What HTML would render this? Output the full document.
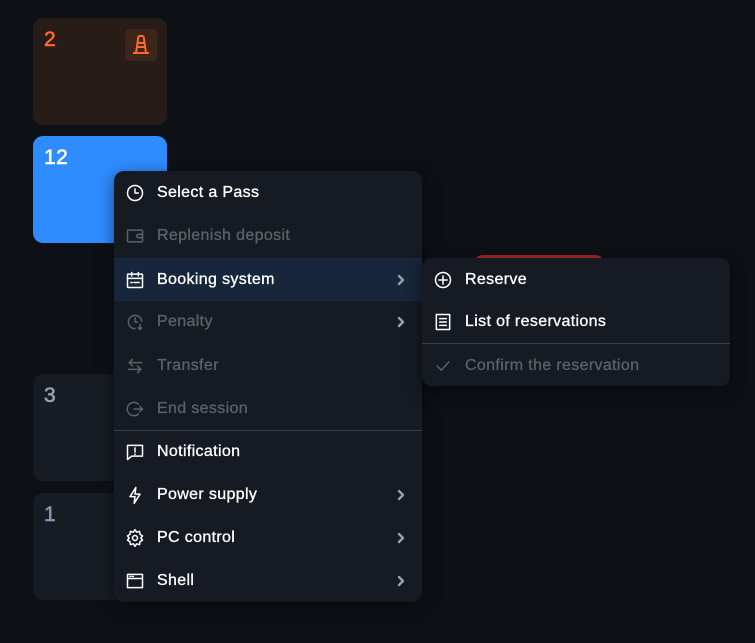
<!DOCTYPE html><html><head><style>
body{margin:0;width:755px;height:643px;background:#0d1116;font-family:"Liberation Sans",sans-serif;position:relative;overflow:hidden}
.t{position:absolute;left:33px;width:134px;height:107px;border-radius:10px}
.t span{position:absolute;left:11px;top:10px;font-size:21px;-webkit-text-stroke:0.6px currentColor;letter-spacing:0.5px}
.m{position:absolute;background:#161b23;border-radius:10px;box-shadow:0 4px 16px rgba(0,0,0,.5)}
.i{position:absolute;left:0;right:0;height:43px;display:flex;align-items:center;font-size:16px;color:#fff;-webkit-text-stroke:0.3px currentColor;letter-spacing:0.35px}
.i svg.ic{position:absolute;left:11px;top:12px;width:20px;height:20px;fill:none;stroke:currentColor;stroke-width:1.8;stroke-linecap:round;stroke-linejoin:round}
.i b{font-weight:normal;position:absolute;left:43px}
.d{color:#5c6168}
.ch{position:absolute;right:14px;top:15px;width:14px;height:14px;fill:none;stroke:#9aa0a8;stroke-width:2.4;stroke-linecap:round;stroke-linejoin:round}
.hr{position:absolute;left:0;right:0;height:1px;background:#3a3f47}
</style></head><body>
<div class="t" style="top:18px;background:#281c19"><span style="color:#ff6a2b">2</span>
<div style="position:absolute;left:92px;top:11px;width:32px;height:32px;border-radius:4px;background:#3d2519"><svg width="32" height="32" viewBox="0 0 32 32" fill="none" stroke="#ff6a2b" stroke-width="2"><path d="M13.5 7h5M13.5 7l-2.5 17M18.5 7l2.5 17M8 24h16M12 14h8M11.5 18h9"/></svg></div></div>
<div class="t" style="top:136px;background:#2f8cff"><span style="color:#fff">12</span></div>
<div style="position:absolute;left:473px;top:255px;width:132px;height:20px;border-radius:10px;background:#a52828"></div>
<div class="t" style="top:374px;background:#171c24"><span style="color:#9aa0a8">3</span></div>
<div class="t" style="top:493px;background:#171c24"><span style="color:#8a92b0">1</span></div>

<div class="m" style="left:114px;top:171px;width:308px;height:431px">
<div class="i" style="top:0"><svg class="ic" viewBox="0 0 24 24"><circle cx="12" cy="12" r="9"/><path d="M12 7v5h4"/></svg><b>Select a Pass</b></div>
<div class="i d" style="top:43px"><svg class="ic" viewBox="0 0 24 24"><rect x="3" y="5" width="18" height="14" rx="1"/><path d="M21 10h-5a2 2 0 0 0 0 4h5"/></svg><b>Replenish deposit</b></div>
<div class="i" style="top:87px;background:#17263a"><svg class="ic" viewBox="0 0 24 24"><rect x="3" y="5" width="18" height="16" rx="1"/><path d="M3 10h18M8 3v4M16 3v4M7 15h2M11 15h6"/></svg><b>Booking system</b><svg class="ch" viewBox="0 0 14 14"><path d="M5 3l4 4-4 4"/></svg></div>
<div class="i d" style="top:129px"><svg class="ic" viewBox="0 0 24 24"><path d="M20 11a8 8 0 1 0-8 9"/><path d="M12 7v5h3M18 15v6M16 19l2 2 2-2"/></svg><b>Penalty</b><svg class="ch" viewBox="0 0 14 14"><path d="M5 3l4 4-4 4"/></svg></div>
<div class="i d" style="top:173px"><svg class="ic" viewBox="0 0 24 24"><path d="M20 8H5M9 4L5 8l4 4M4 16h15M15 12l4 4-4 4"/></svg><b>Transfer</b></div>
<div class="i d" style="top:216px"><svg class="ic" viewBox="0 0 24 24"><path d="M16 6a8 8 0 1 0 0 12M11 12h10M18 9l3 3-3 3"/></svg><b>End session</b></div>
<div class="hr" style="top:259px"></div>
<div class="i" style="top:259px"><svg class="ic" viewBox="0 0 24 24"><path d="M3 4h18v13H8l-5 4z"/><path d="M12 7v5M12 14.5v.5"/></svg><b>Notification</b></div>
<div class="i" style="top:302px"><svg class="ic" viewBox="0 0 24 24"><path d="M13 3L6 14h6l-1 8 7-11h-6z"/></svg><b>Power supply</b><svg class="ch" viewBox="0 0 14 14"><path d="M5 3l4 4-4 4"/></svg></div>
<div class="i" style="top:345px"><svg class="ic" viewBox="0 0 24 24"><circle cx="12" cy="12" r="3"/><path d="M12 2l2 3 3.5-1 .5 3.5 3 2-2 2.5 2 2.5-3 2-.5 3.5-3.5-1-2 3-2-3-3.5 1-.5-3.5-3-2 2-2.5-2-2.5 3-2L6.5 4 10 5z"/></svg><b>PC control</b><svg class="ch" viewBox="0 0 14 14"><path d="M5 3l4 4-4 4"/></svg></div>
<div class="i" style="top:388px"><svg class="ic" viewBox="0 0 24 24"><rect x="3" y="4" width="18" height="16"/><path d="M3 9h18M6 6.5h1M9 6.5h1"/></svg><b>Shell</b><svg class="ch" viewBox="0 0 14 14"><path d="M5 3l4 4-4 4"/></svg></div>
</div>

<div class="m" style="left:422px;top:258px;width:308px;height:128px">
<div class="i" style="top:0"><svg class="ic" viewBox="0 0 24 24"><circle cx="12" cy="12" r="9"/><path d="M12 7v10M7 12h10"/></svg><b>Reserve</b></div>
<div class="i" style="top:42px"><svg class="ic" viewBox="0 0 24 24"><rect x="4" y="3" width="16" height="18"/><path d="M8 8h8M8 12h8M8 16h8"/></svg><b>List of reservations</b></div>
<div class="hr" style="top:85px"></div>
<div class="i d" style="top:86px"><svg class="ic" viewBox="0 0 24 24"><path d="M5 12l5 5 9-10"/></svg><b>Confirm the reservation</b></div>
</div>
</body></html>
